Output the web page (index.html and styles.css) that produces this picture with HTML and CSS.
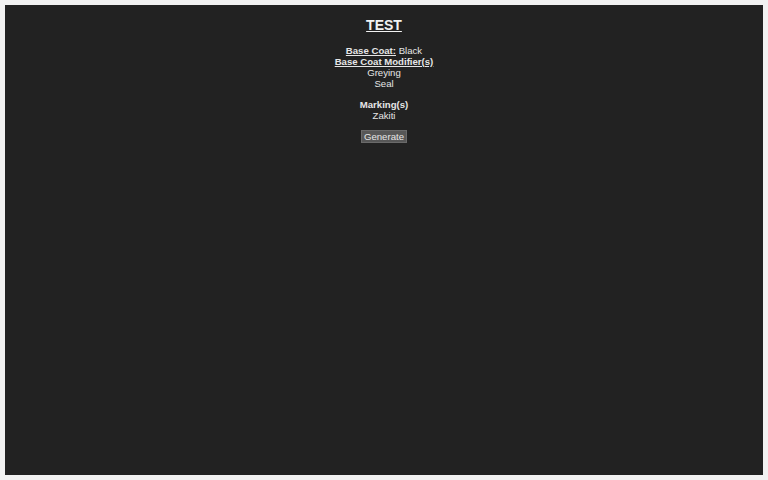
FILE: index.html
```html
<!DOCTYPE html>
<html>
<head>
<meta charset="utf-8">
<link rel="stylesheet" href="styles.css">
</head>
<body>
<div class="panel">
  <div class="title">TEST</div>
  <div class="group">
    <div><span class="label">Base Coat:</span> Black</div>
    <div><span class="label">Base Coat Modifier(s)</span></div>
    <div>Greying</div>
    <div>Seal</div>
  </div>
  <div class="group">
    <div><span class="heading">Marking(s)</span></div>
    <div>Zakiti</div>
  </div>
  <button class="btn">Generate</button>
</div>
</body>
</html>
```
FILE: styles.css
```css
html, body {
  margin: 0;
  padding: 0;
}
body {
  background: #f2f2f2;
  padding: 5px;
  font-family: "Liberation Sans", Arial, sans-serif;
}
.panel {
  background: #222222;
  height: 470px;
  box-sizing: border-box;
  padding-top: 12px;
  color: #e6e6e6;
  text-align: center;
  font-size: 9.6px;
  line-height: 11px;
}
.title {
  font-size: 14px;
  line-height: 16px;
  font-weight: bold;
  text-decoration: underline;
  color: #f2f2f2;
  margin-bottom: 12px;
}
.group {
  margin-bottom: 10px;
}
.label {
  font-weight: bold;
  text-decoration: underline;
}
.heading {
  font-weight: bold;
}
.btn {
  margin-top: -1px;
  font-family: "Liberation Sans", Arial, sans-serif;
  font-size: 9.6px;
  line-height: 11px;
  color: #e6e6e6;
  background: #575757;
  border: 1px solid #6a6a6a;
  border-radius: 0;
  padding: 0 2px;
}
```
